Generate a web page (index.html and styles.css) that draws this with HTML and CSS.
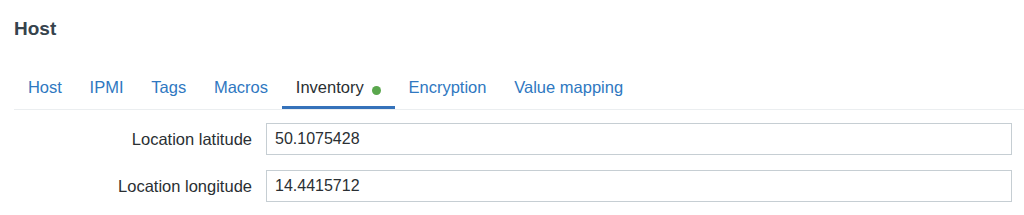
FILE: index.html
```html
<!DOCTYPE html>
<html lang="en">
<head>
<meta charset="utf-8">
<title>Host</title>
<link rel="stylesheet" href="styles.css">
</head>
<body>
<div class="page">
  <h1 class="title">Host</h1>
  <ul class="tabs">
    <li class="tab"><a href="#">Host</a></li>
    <li class="tab"><a href="#">IPMI</a></li>
    <li class="tab"><a href="#">Tags</a></li>
    <li class="tab"><a href="#">Macros</a></li>
    <li class="tab tab-active"><a href="#">Inventory</a><span class="dot"></span></li>
    <li class="tab"><a href="#">Encryption</a></li>
    <li class="tab"><a href="#">Value mapping</a></li>
  </ul>
  <div class="form">
    <label class="form-label" for="lat">Location latitude</label>
    <input class="form-input" id="lat" type="text" value="50.1075428">
    <label class="form-label" for="lon">Location longitude</label>
    <input class="form-input" id="lon" type="text" value="14.4415712">
  </div>
</div>
</body>
</html>
```

FILE: styles.css
```css
* { box-sizing: border-box; }
html, body { margin: 0; padding: 0; background: #ffffff; }
body { font-family: "Liberation Sans", Arial, Helvetica, sans-serif; color: #1f2c33; }

.page { padding: 17px 0 0 14px; }

.title {
  margin: 0;
  font-size: 19px;
  line-height: 24px;
  font-weight: bold;
  color: #36434d;
}

.tabs {
  list-style: none;
  margin: 29px 0 0 0;
  padding: 0;
  display: flex;
  border-bottom: 1px solid #ebeef0;
}

.tab {
  padding: 7px 13.9px 9px 13.9px;
  border-bottom: 3px solid transparent;
  font-size: 16.5px;
  line-height: 20px;
}

.tab a { color: #2f78c1; text-decoration: none; }

.tab-active { border-bottom-color: #3572ba; }
.tab-active a { color: #2a2f33; }

.dot {
  display: inline-block;
  width: 9px;
  height: 9px;
  border-radius: 50%;
  background: #5aa74d;
  margin-left: 8px;
  vertical-align: -2px;
}

.form {
  display: grid;
  grid-template-columns: 238px 1fr;
  column-gap: 14px;
  row-gap: 15px;
  align-items: center;
  margin-top: 13px;
  padding-right: 12px;
}

.form-label {
  text-align: right;
  font-size: 16.5px;
  line-height: 20px;
  color: #2a2f33;
}

.form-input {
  height: 32px;
  border: 1px solid #c6ced3;
  border-radius: 0;
  padding: 0 8px;
  font-family: "Liberation Sans", Arial, Helvetica, sans-serif;
  font-size: 16px;
  color: #2a2f33;
  background: #ffffff;
  outline: none;
}
```
